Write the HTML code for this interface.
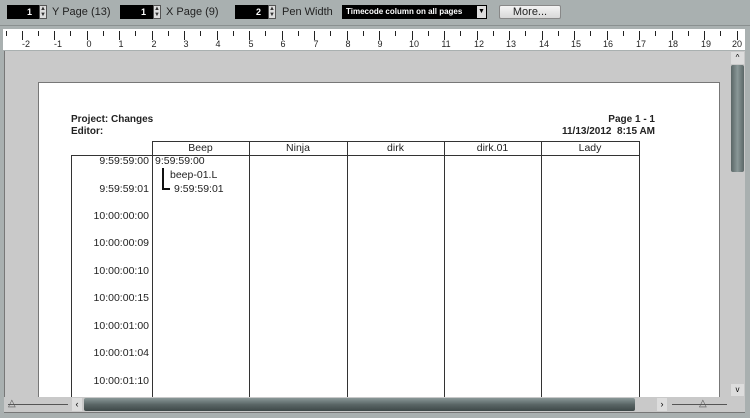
<!DOCTYPE html>
<html><head><style>
body{margin:0;width:750px;height:418px;background:#a9b0b0;font-family:"Liberation Sans",sans-serif;position:relative;overflow:hidden}
.a{position:absolute}
.spin{position:absolute;top:5px;height:14px;background:#000;color:#fff;font-size:9px;font-weight:bold;text-align:right;line-height:14px;box-sizing:border-box;padding-right:8px}
.arr{position:absolute;top:5px;width:8px;height:14px;background:#ddd;border:1px solid #555;box-sizing:border-box;font-size:6px;line-height:6px;text-align:center;color:#333}
.lbl{position:absolute;top:5px;font-size:11px;color:#222;line-height:14px}
.t{position:absolute;font-size:10.5px;color:#222}
.rt{position:absolute;width:78px;text-align:right;font-size:10.5px;color:#222;left:71px}
.hd{position:absolute;top:141px;height:14px;font-size:10.5px;text-align:center;line-height:14px;color:#222}
.vl{position:absolute;top:141px;height:256px;width:1px;background:#333}
</style></head><body>
<div class="spin" style="left:7px;width:33px">1</div><div class="arr" style="left:39px">▲<br>▼</div><div class="lbl" style="left:52px">Y Page (13)</div>
<div class="spin" style="left:120px;width:34px">1</div><div class="arr" style="left:153px">▲<br>▼</div><div class="lbl" style="left:166px">X Page (9)</div>
<div class="spin" style="left:235px;width:34px">2</div><div class="arr" style="left:268px">▲<br>▼</div><div class="lbl" style="left:282px">Pen Width</div>
<div class="a" style="left:342px;top:5px;width:145px;height:14px;background:#000;color:#fff;font-size:8px;font-weight:bold;line-height:14px;padding-left:4px;box-sizing:border-box">Timecode column on all pages</div>
<div class="a" style="left:477px;top:6px;width:9px;height:12px;background:#ddd;font-size:7px;line-height:12px;text-align:center">▼</div>
<div class="a" style="left:499px;top:5px;width:62px;height:14px;background:linear-gradient(#f4f4f4,#d8d8d8);border:1px solid #888;border-radius:2px;box-sizing:border-box;font-size:11px;text-align:center;line-height:12px;color:#222">More...</div>
<div class="a" style="left:0;top:25px;width:750px;height:1px;background:#8a9090"></div>
<div class="a" style="left:3px;top:29px;width:742px;height:21px;background:#fff"></div>
<svg class="a" style="left:0;top:29px" width="750" height="21">
<g stroke="#222" stroke-width="1">
<path d="M22.5 2v9M38.5 2v5M54.5 2v9M70.5 2v5M87.5 2v9M103.5 2v5M119.5 2v9M135.5 2v5M152.5 2v9M168.5 2v5M184.5 2v9M200.5 2v5M217.5 2v9M233.5 2v5M249.5 2v9M265.5 2v5M282.5 2v9M298.5 2v5M314.5 2v9M330.5 2v5M347.5 2v9M363.5 2v5M379.5 2v9M395.5 2v5M412.5 2v9M428.5 2v5M444.5 2v9M460.5 2v5M477.5 2v9M493.5 2v5M509.5 2v9M525.5 2v5M542.5 2v9M558.5 2v5M574.5 2v9M590.5 2v5M607.5 2v9M623.5 2v5M639.5 2v9M655.5 2v5M672.5 2v9M688.5 2v5M704.5 2v9M720.5 2v5M737.5 2v9M6.5 2v5"/>
</g>
<g font-size="9" fill="#222" text-anchor="middle" font-family="Liberation Sans">
<text x="26" y="18">-2</text><text x="58" y="18">-1</text><text x="89" y="18">0</text><text x="121" y="18">1</text><text x="154" y="18">2</text><text x="186" y="18">3</text><text x="218" y="18">4</text><text x="251" y="18">5</text><text x="283" y="18">6</text><text x="316" y="18">7</text><text x="348" y="18">8</text><text x="380" y="18">9</text><text x="414" y="18">10</text><text x="446" y="18">11</text><text x="479" y="18">12</text><text x="511" y="18">13</text><text x="544" y="18">14</text><text x="576" y="18">15</text><text x="608" y="18">16</text><text x="641" y="18">17</text><text x="673" y="18">18</text><text x="706" y="18">19</text><text x="737" y="18">20</text>
</g></svg>
<div class="a" style="left:4px;top:51px;width:726px;height:346px;background:#c9c9c9;border-left:1px solid #777"></div>
<div class="a" style="left:38px;top:82px;width:682px;height:316px;background:#fff;border:1px solid #777;border-bottom:none;box-sizing:border-box"></div>
<div class="a" style="left:730px;top:51px;width:15px;height:346px;background:#c9c9c9"></div>
<div class="a" style="left:731px;top:52px;width:13px;height:12px;background:#ddd;font-size:8px;text-align:center;line-height:12px">^</div>
<div class="a" style="left:731px;top:65px;width:13px;height:107px;background:linear-gradient(90deg,#5a6666,#8a9898,#5a6666);border-radius:2px"></div>
<div class="a" style="left:731px;top:384px;width:13px;height:12px;background:#ddd;font-size:8px;text-align:center;line-height:12px">v</div>
<div class="t" style="left:71px;top:114px;font-weight:bold;font-size:10px">Project: Changes</div>
<div class="t" style="left:71px;top:126px;font-weight:bold;font-size:10px">Editor:</div>
<div class="t" style="left:590px;top:114px;width:65px;text-align:right;font-weight:bold;font-size:10px">Page 1 - 1</div>
<div class="t" style="left:545px;top:126px;width:110px;text-align:right;font-weight:bold;font-size:10px">11/13/2012&nbsp; 8:15 AM</div>
<div class="a" style="left:152px;top:141px;width:487px;height:1px;background:#333"></div>
<div class="a" style="left:71px;top:155px;width:568px;height:1px;background:#333"></div>
<div class="vl" style="left:71px;top:155px"></div><div class="vl" style="left:152px"></div><div class="vl" style="left:249px"></div><div class="vl" style="left:347px"></div><div class="vl" style="left:444px"></div><div class="vl" style="left:541px"></div><div class="vl" style="left:639px"></div>
<div class="hd" style="left:152px;width:97px">Beep</div><div class="hd" style="left:249px;width:98px">Ninja</div><div class="hd" style="left:347px;width:97px">dirk</div><div class="hd" style="left:444px;width:97px">dirk.01</div><div class="hd" style="left:541px;width:98px">Lady</div>
<div class="rt" style="top:155px">9:59:59:00</div>
<div class="rt" style="top:183px">9:59:59:01</div>
<div class="rt" style="top:210px">10:00:00:00</div>
<div class="rt" style="top:237px">10:00:00:09</div>
<div class="rt" style="top:265px">10:00:00:10</div>
<div class="rt" style="top:292px">10:00:00:15</div>
<div class="rt" style="top:320px">10:00:01:00</div>
<div class="rt" style="top:347px">10:00:01:04</div>
<div class="rt" style="top:375px">10:00:01:10</div>
<div class="t" style="left:155px;top:155px">9:59:59:00</div>
<div class="t" style="left:170px;top:169px">beep-01.L</div>
<div class="t" style="left:174px;top:183px">9:59:59:01</div>
<div class="a" style="left:162px;top:168px;width:2px;height:22px;background:#111"></div>
<div class="a" style="left:162px;top:188px;width:8px;height:2px;background:#111"></div>
<div class="a" style="left:4px;top:397px;width:741px;height:15px;background:#c9c9c9;border-bottom:1px solid #777"></div>
<div class="a" style="left:8px;top:404px;width:60px;height:1px;background:#555"></div>
<div class="a" style="left:8px;top:398px;font-size:10px;color:#555">△</div>
<div class="a" style="left:72px;top:398px;width:10px;height:13px;background:#ddd;font-size:9px;line-height:13px;text-align:center">‹</div>
<div class="a" style="left:84px;top:398px;width:551px;height:13px;background:linear-gradient(#8a9898,#5a6666 50%,#3e4848);border-radius:2px"></div>
<div class="a" style="left:657px;top:398px;width:10px;height:13px;background:#ddd;font-size:9px;line-height:13px;text-align:center">›</div>
<div class="a" style="left:672px;top:404px;width:55px;height:1px;background:#555"></div>
<div class="a" style="left:699px;top:398px;font-size:10px;color:#555">△</div>
</body></html>
